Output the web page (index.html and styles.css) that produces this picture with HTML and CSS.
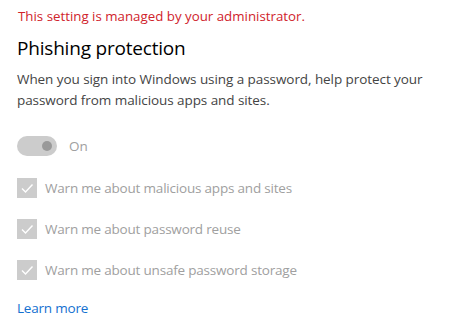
FILE: index.html
```html
<!DOCTYPE html>
<html>
<head>
<meta charset="utf-8">
<link rel="stylesheet" href="styles.css">
</head>
<body>
<div class="page">
  <div class="admin">This setting is managed by your administrator.</div>
  <h1 class="title">Phishing protection</h1>
  <p class="desc">When you sign into Windows using a password, help protect your password from malicious apps and sites.</p>
  <div class="toggle-row">
    <span class="toggle"><span class="knob"></span></span>
    <span class="toggle-label">On</span>
  </div>
  <div class="checks">
    <div class="check-row">
      <span class="box"><svg viewBox="0 0 20 20" width="20" height="20"><path d="M5 10.5 L8.5 14 L15.5 6.5" fill="none" stroke="#fff" stroke-width="1.4"/></svg></span>
      <span class="check-label">Warn me about malicious apps and sites</span>
    </div>
    <div class="check-row">
      <span class="box"><svg viewBox="0 0 20 20" width="20" height="20"><path d="M5 10.5 L8.5 14 L15.5 6.5" fill="none" stroke="#fff" stroke-width="1.4"/></svg></span>
      <span class="check-label">Warn me about password reuse</span>
    </div>
    <div class="check-row">
      <span class="box"><svg viewBox="0 0 20 20" width="20" height="20"><path d="M5 10.5 L8.5 14 L15.5 6.5" fill="none" stroke="#fff" stroke-width="1.4"/></svg></span>
      <span class="check-label">Warn me about unsafe password storage</span>
    </div>
  </div>
  <a class="learn" href="#">Learn more</a>
</div>
</body>
</html>
```
FILE: styles.css
```css
html, body {
  margin: 0;
  padding: 0;
  background: #fff;
}
.page {
  padding: 7px 17px 0 17px;
  font-family: "Open Sans", "Noto Sans", sans-serif;
  display: flex;
  flex-direction: column;
  align-items: flex-start;
}
.admin {
  color: #d0232b;
  font-size: 13.3px;
  line-height: 18px;
  letter-spacing: 0;
  margin-left: 1px;
}
.title {
  font-weight: 400;
  font-size: 19px;
  line-height: 26px;
  margin: 10px 0 0 0;
  color: #000;
  letter-spacing: -0.2px;
}
.desc {
  margin: 8px 0 0 0;
  font-size: 13.5px;
  line-height: 21px;
  color: #444;
  letter-spacing: -0.07px;
  max-width: 450px;
}
.toggle-row {
  display: flex;
  align-items: center;
  margin-top: 25px;
  gap: 12px;
}
.toggle {
  width: 40px;
  height: 20px;
  border-radius: 10px;
  background: #cccccc;
  display: flex;
  align-items: center;
  justify-content: flex-end;
  padding-right: 5px;
  box-sizing: border-box;
}
.knob {
  width: 10px;
  height: 10px;
  border-radius: 50%;
  background: #999;
}
.toggle-label {
  color: #a0a0a0;
  font-size: 13.5px;
}
.checks {
  display: flex;
  flex-direction: column;
  gap: 21px;
  margin-top: 22px;
}
.check-row {
  display: flex;
  align-items: center;
  gap: 8px;
  height: 20px;
}
.box {
  width: 20px;
  height: 20px;
  background: #cccccc;
  display: block;
}
.box svg { display: block; }
.check-label {
  color: #a0a0a0;
  font-size: 13.5px;
  letter-spacing: -0.2px;
}
.learn {
  margin-top: 19px;
  color: #1470d0;
  text-decoration: none;
  font-size: 13.5px;
  letter-spacing: -0.2px;
  font-weight: 500;
}
```
